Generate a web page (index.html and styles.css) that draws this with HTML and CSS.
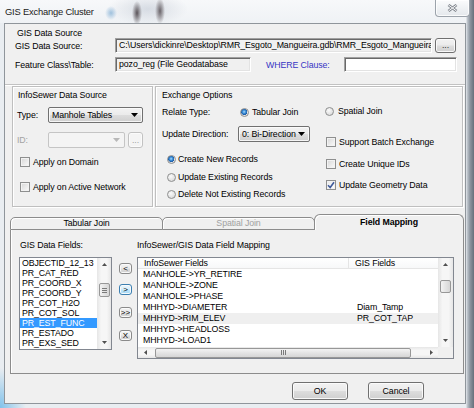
FILE: index.html
```html
<!DOCTYPE html>
<html lang="en">
<head>
<meta charset="utf-8">
<title>GIS Exchange Cluster</title>
<link rel="stylesheet" href="styles.css">
</head>
<body>
<div class="window">
  <div class="titlebar">
    <span class="title">GIS Exchange Cluster</span>
    <div class="close">
      <svg width="11" height="8" viewBox="0 0 11 8"><path d="M1.5 1 L9.5 7 M9.5 1 L1.5 7" stroke="#868b92" stroke-width="2.8"/><path d="M1.5 1 L9.5 7 M9.5 1 L1.5 7" stroke="#f6f7f9" stroke-width="1"/></svg>
    </div>
  </div>
  <div class="frame">
    <div class="client">
      <div class="gis-src">
        <div class="cap">GIS Data Source</div>
        <div class="row">
          <span class="lbl">GIS Data Source:</span>
          <div class="edit path">C:\Users\dickinre\Desktop\RMR_Esgoto_Mangueira.gdb\RMR_Esgoto_Mangueira</div>
          <div class="btn dots">...</div>
        </div>
        <div class="row row2">
          <span class="lbl">Feature Class\Table:</span>
          <div class="edit ro">pozo_reg (File Geodatabase</div>
          <span class="where">WHERE Clause:</span>
          <div class="edit where-box"></div>
        </div>
      </div>

      <div class="mid">
        <div class="box infosewer">
          <div class="cap">InfoSewer Data Source</div>
          <div class="frow type-row">
            <span class="flbl">Type:</span>
            <div class="combo type-combo"><span>Manhole Tables</span><svg width="7" height="4" viewBox="0 0 7 4"><path d="M0 0h7L3.5 4z" fill="#000"/></svg></div>
          </div>
          <div class="frow id-row">
            <span class="flbl dis">ID:</span>
            <div class="combo dis id-combo"><span></span><svg width="7" height="4" viewBox="0 0 7 4"><path d="M0 0h7L3.5 4z" fill="#b8b8b8"/></svg></div>
            <div class="btn mini dis">...</div>
          </div>
          <div class="chkrow dom"><span class="chk"></span>Apply on Domain</div>
          <div class="chkrow act"><span class="chk"></span>Apply on Active Network</div>
        </div>

        <div class="box exchange">
          <div class="ex-left">
            <div class="cap">Exchange Options</div>
            <div class="frow relate"><span class="rlbl">Relate Type:</span><span class="radio on"></span><span class="rtxt">Tabular Join</span></div>
            <div class="frow dir"><span class="dlbl">Update Direction:</span><div class="combo dir-combo"><span>0: Bi-Direction</span><svg width="7" height="4" viewBox="0 0 7 4"><path d="M0 0h7L3.5 4z" fill="#000"/></svg></div></div>
            <div class="rrow r1"><span class="radio on"></span>Create New Records</div>
            <div class="rrow r2"><span class="radio"></span>Update Existing Records</div>
            <div class="rrow r3"><span class="radio"></span>Delete Not Existing Records</div>
          </div>
          <div class="ex-right">
            <div class="rrow sp"><span class="radio"></span>Spatial Join</div>
            <div class="chkrow k1"><span class="chk"></span>Support Batch Exchange</div>
            <div class="chkrow k2"><span class="chk"></span>Create Unique IDs</div>
            <div class="chkrow k3"><span class="chk on"><svg width="8" height="8" viewBox="0 0 8 8"><path d="M1 4.2 L3.2 6.5 L7 1.2" fill="none" stroke="#3f5a9a" stroke-width="1.6"/></svg></span>Update Geometry Data</div>
          </div>
        </div>
      </div>

      <div class="tabs">
        <div class="tab t1">Tabular Join</div>
        <div class="tab t2">Spatial Join</div>
        <div class="tab active">Field Mapping</div>
        <div class="tab-fill"></div>
      </div>
      <div class="panel">
        <div class="col gis-col">
          <div class="plbl">GIS Data Fields:</div>
          <div class="listbox">
            <div class="items">
              <div>OBJECTID_12_13</div>
              <div>PR_CAT_RED</div>
              <div>PR_COORD_X</div>
              <div>PR_COORD_Y</div>
              <div>PR_COT_H2O</div>
              <div>PR_COT_SOL</div>
              <div class="sel">PR_EST_FUNC</div>
              <div>PR_ESTADO</div>
              <div>PR_EXS_SED</div>
            </div>
            <div class="vscroll">
              <div class="arr"><svg width="5" height="3" viewBox="0 0 5 3"><path d="M0 3h5L2.5 0z" fill="#505050"/></svg></div>
              <div class="track"><div class="thumb vthumb g1"><i></i><i></i><i></i></div></div>
              <div class="arr"><svg width="5" height="3" viewBox="0 0 5 3"><path d="M0 0h5L2.5 3z" fill="#505050"/></svg></div>
            </div>
          </div>
        </div>
        <div class="col btn-col">
          <div class="btn sb b1">&lt;</div>
          <div class="btn sb b2 hot">&gt;</div>
          <div class="btn sb b3">&gt;&gt;</div>
          <div class="btn sb b4">X</div>
        </div>
        <div class="col map-col">
          <div class="plbl">InfoSewer/GIS Data Field Mapping</div>
          <div class="listview">
            <div class="lv-body">
              <div class="lv-head"><span class="h1">InfoSewer Fields</span><span class="h2">GIS Fields</span></div>
              <div class="lv-row"><span class="lc1">MANHOLE-&gt;YR_RETIRE</span><span class="lc2"></span></div>
              <div class="lv-row"><span class="lc1">MANHOLE-&gt;ZONE</span><span class="lc2"></span></div>
              <div class="lv-row"><span class="lc1">MANHOLE-&gt;PHASE</span><span class="lc2"></span></div>
              <div class="lv-row"><span class="lc1">MHHYD-&gt;DIAMETER</span><span class="lc2">Diam_Tamp</span></div>
              <div class="lv-row hl"><span class="lc1">MHHYD-&gt;RIM_ELEV</span><span class="lc2">PR_COT_TAP</span></div>
              <div class="lv-row"><span class="lc1">MHHYD-&gt;HEADLOSS</span><span class="lc2"></span></div>
              <div class="lv-row"><span class="lc1">MHHYD-&gt;LOAD1</span><span class="lc2"></span></div>
            </div>
            <div class="vscroll lv-v">
              <div class="arr"><svg width="5" height="3" viewBox="0 0 5 3"><path d="M0 3h5L2.5 0z" fill="#505050"/></svg></div>
              <div class="track"><div class="thumb vthumb g2"></div></div>
              <div class="arr"><svg width="5" height="3" viewBox="0 0 5 3"><path d="M0 0h5L2.5 3z" fill="#505050"/></svg></div>
            </div>
            <div class="hscroll">
              <div class="harr"><svg width="3" height="5" viewBox="0 0 3 5"><path d="M3 0v5L0 2.5z" fill="#505050"/></svg></div>
              <div class="htrack"><div class="thumb hthumb"><i></i><i></i><i></i></div></div>
              <div class="harr"><svg width="3" height="5" viewBox="0 0 3 5"><path d="M0 0v5L3 2.5z" fill="#505050"/></svg></div>
            </div>
            <div class="corner"></div>
          </div>
        </div>
      </div>

      <div class="actions">
        <div class="btn act-btn ok">OK</div>
        <div class="btn act-btn cancel">Cancel</div>
      </div>
    </div>
  </div>
</div>
</body>
</html>
```

FILE: styles.css
```css
* { box-sizing: border-box; margin: 0; padding: 0; }
html, body { width: 474px; height: 408px; overflow: hidden; }
body {
  font-family: "Liberation Sans", Arial, sans-serif;
  font-size: 8.8px;
  letter-spacing: -0.1px;
  color: #000;
  background: #e9edf1;
}
svg { display: block; }

.window {
  width: 474px;
  height: 408px;
  display: flex;
  flex-direction: column;
  background:
    radial-gradient(ellipse 26px 40px at 0 408px, rgba(60, 165, 230, .6), transparent),
    linear-gradient(to right, transparent 466px, #c4cad1 467px, #8d96a0 470px, #66707b 474px),
    #e9edf1;
}

/* title bar */
.titlebar {
  height: 23px;
  flex: none;
  display: flex;
  justify-content: space-between;
  align-items: flex-start;
  padding-left: 5px;
  background:
    radial-gradient(ellipse 5px 12px at 137px 13px, rgba(45, 35, 40, .75), transparent),
    radial-gradient(ellipse 5px 13px at 160px 11px, rgba(55, 45, 50, .7), transparent),
    radial-gradient(ellipse 6px 7px at 111px 13px, rgba(90, 150, 200, .55), transparent),
    radial-gradient(ellipse 40px 16px at 148px 9px, rgba(190, 198, 210, .55), transparent),
    linear-gradient(to right, transparent 466px, #c4cad1 467px, #8d96a0 470px, #66707b 474px),
    linear-gradient(#f7f8fa, #eff2f5);
}
.title {
  font-size: 9.4px;
  letter-spacing: -0.2px;
  line-height: 12px;
  margin-top: 6px;
  color: #1a1a1a;
}
.close {
  width: 35px;
  height: 17px;
  margin-right: 4px;
  border: 1px solid #9ca3ab;
  border-top: none;
  border-radius: 0 0 4px 4px;
  background: linear-gradient(#fbfcfd, #e4e8ec);
  box-shadow: inset 0 0 0 1px rgba(255,255,255,.8);
  display: flex;
  align-items: center;
  justify-content: center;
}

.frame { flex: 1; display: flex; padding: 0 8px 4px 4px; }
.client {
  flex: 1;
  border: 1px solid #8f959b;
  background: #f0f0f0;
  display: flex;
  flex-direction: column;
}

/* top section */
.gis-src {
  height: 61px;
  flex: none;
  border-bottom: 1px solid #c2c2c2;
  box-shadow: 0 1px 0 #fff;
  padding: 4px 0 0 10px;
}
.cap { line-height: 12px; height: 12px; white-space: nowrap; }
.gis-src .cap { margin: -1px 0 0 2px; height: 11px; }
.row { display: flex; align-items: center; height: 15px; }
.row2 { margin-top: 4px; }
.lbl { width: 100px; flex: none; white-space: nowrap; }
.edit {
  height: 15px;
  background: #f0f0f0;
  border: 1px solid;
  border-color: #a0a0a0 #fff #fff #a0a0a0;
  box-shadow: inset 1px 1px 0 #696969, inset -1px -1px 0 #e3e3e3;
  padding: 0 3px;
  line-height: 13px;
  white-space: nowrap;
  overflow: hidden;
  flex: none;
}
.path { width: 317px; }
.ro { width: 136px; }
.where { width: 78px; margin-left: 15px; color: #3636c4; flex: none; white-space: nowrap; }
.where-box { width: 113px; background: #fff; }

.btn {
  border: 1px solid #707070;
  border-radius: 3px;
  background: linear-gradient(#f2f2f2 0%, #ebebeb 48%, #dddddd 52%, #cfcfcf 100%);
  box-shadow: inset 0 0 0 1px rgba(252,252,252,.9);
  display: flex;
  align-items: center;
  justify-content: center;
  flex: none;
}
.dots { width: 21px; height: 15px; margin-left: 3px; line-height: 8px; align-items: flex-start; padding-top: 2px; color: #333; }

/* middle boxes */
.mid { display: flex; margin: 1px 0 0 7px; gap: 2px; flex: none; }
.box {
  height: 121px;
  border: 1px solid #bfbfbf;
  box-shadow: inset 1px 1px 0 #fff, 1px 1px 0 #fff;
}
.infosewer { width: 141px; padding-left: 4px; }
.infosewer .cap { margin: 2px 0 0 1px; }
.frow { display: flex; align-items: center; white-space: nowrap; }
.type-row { margin-top: 6px; height: 16px; }
.id-row { margin-top: 9px; height: 16px; }
.flbl { width: 31px; flex: none; }
.dis { color: #a3a3a3; }

.combo {
  height: 16px;
  border: 1px solid #707070;
  border-radius: 2px;
  background: linear-gradient(#f3f3f3 0%, #ebebeb 48%, #dddddd 52%, #cfcfcf 100%);
  box-shadow: inset 0 0 0 1px rgba(252,252,252,.85);
  display: flex;
  align-items: center;
  justify-content: space-between;
  padding: 0 4px 0 3px;
  flex: none;
  white-space: nowrap;
}
.type-combo { width: 95px; }
.id-combo { width: 77px; border-color: #c5c5c5; background: #f4f4f4; box-shadow: none; }
.mini { width: 15px; height: 16px; margin-left: 3px; border-color: #c2c2c2; background: #f4f4f4; line-height: 8px; align-items: flex-start; padding-top: 3px; }
.dir-combo { width: 72px; }

.chkrow, .rrow { display: flex; align-items: center; height: 12px; white-space: nowrap; }
.chk {
  width: 10px; height: 10px; flex: none;
  border: 1px solid #8e8f8f;
  background: linear-gradient(135deg, #d6d6d6, #fbfbfb);
  box-shadow: inset 0 0 0 1px #f2f2f2;
  margin-right: 3px;
  display: flex; align-items: center; justify-content: center;
}
.chk.on { background: linear-gradient(135deg, #e8e8e8, #ffffff); }
.radio {
  width: 9px; height: 9px; flex: none;
  border-radius: 50%;
  border: 1px solid #8e8f8f;
  background: radial-gradient(circle at 40% 35%, #fafafa, #d2d2d2);
}
.radio.on {
  background:
    radial-gradient(circle at 45% 40%, #a9dcff 0, #3d8fd8 1.6px, #1b5aa5 3px, transparent 3.3px),
    radial-gradient(circle at 40% 35%, #fafafa, #d9d9d9);
}

.infosewer .dom { margin-top: 8px; padding-left: 3px; }
.infosewer .act { margin-top: 13px; padding-left: 3px; }

.exchange { width: 308px; padding-left: 6px; display: flex; }
.ex-left { width: 163px; flex: none; }
.exchange .cap { margin-top: 2px; }
.relate { margin-top: 5px; height: 12px; }
.rlbl { width: 78px; flex: none; }
.rtxt { margin-left: 3px; }
.dir { margin-top: 8px; height: 16px; }
.dlbl { width: 76px; flex: none; }
.ex-left .rrow { padding-left: 5px; }
.ex-left .rrow .radio { margin-right: 2px; }
.r1 { margin-top: 11px; }
.r2 { margin-top: 6px; }
.r3 { margin-top: 5px; }
.ex-right .sp { margin-top: 18px; }
.ex-right .sp .radio { margin-right: 4px; }
.ex-right .chkrow { padding-left: 1px; }
.k1 { margin-top: 19px; }
.k2 { margin-top: 10px; }
.k3 { margin-top: 9px; }

/* tabs */
.tabs { display: flex; align-items: flex-end; margin: 7px 0 0 5px; height: 16px; flex: none; width: 454px; }
.tab {
  height: 13px;
  border: 1px solid #8c8c8c;
  border-radius: 5px 5px 0 0;
  background: #f0f0f0;
  box-shadow: inset 1px 1px 0 #fff;
  text-align: center;
  line-height: 11px;
  flex: none;
}
.t1 { width: 153px; }
.t2 { width: 153px; margin-left: -1px; color: #a0a0a0; }
.tab.active {
  width: 150px;
  height: 16px;
  margin-left: -1px;
  border-bottom: none;
  font-weight: bold;
  line-height: 15px;
  border-radius: 6px 6px 0 0;
}
.tab-fill { flex: 1; border-bottom: 1px solid #8c8c8c; }

.panel {
  margin-left: 5px;
  width: 454px;
  height: 144px;
  flex: none;
  border: 1px solid #8c8c8c;
  border-top: none;
  box-shadow: inset 1px 0 0 #fff;
  display: flex;
  padding: 9px 0 0 8px;
}
.col { display: flex; flex-direction: column; flex: none; }
.plbl { height: 12px; line-height: 12px; margin-bottom: 6px; white-space: nowrap; }
.gis-col { width: 93px; }
.gis-col .plbl { margin-left: 1px; }
.listbox {
  height: 93px;
  border: 1px solid #828790;
  background: #fff;
  display: flex;
}
.items { flex: 1; overflow: hidden; }
.items div { height: 10px; line-height: 10px; padding-left: 2px; white-space: nowrap; }
.items .sel { background: #3399ff; color: #fff; }

.vscroll {
  width: 14px;
  flex: none;
  display: flex;
  flex-direction: column;
  background: linear-gradient(to right, #e6e6e6, #f6f6f6 30%, #f6f6f6 70%, #e6e6e6);
}
.arr { height: 13px; display: flex; align-items: center; justify-content: center; flex: none; }
.track { flex: 1; display: flex; flex-direction: column; align-items: center; }
.thumb {
  border: 1px solid #979797;
  border-radius: 2px;
  background: linear-gradient(to right, #f3f3f3, #e4e4e4 50%, #d6d6d6);
  display: flex;
  align-items: center;
  justify-content: center;
  gap: 1px;
}
.vthumb { width: 11px; flex-direction: column; }
.vthumb i { display: block; width: 5px; height: 1px; background: #7a7a7a; }
.g1 { height: 14px; margin-top: 12px; }
.g2 { height: 13px; margin-top: 9px; }

.btn-col { margin-left: 7px; width: 13px; padding-top: 24px; }
.sb { width: 13px; height: 11px; font-size: 8px; line-height: 9px; border-color: #8a8a8a; letter-spacing: 0; }
.b2 { margin-top: 10px; }
.b3 { margin-top: 12px; }
.b4 { margin-top: 12px; }
.sb.hot { border-color: #3c7fb1; background: linear-gradient(#eaf6fd, #d9f0fc 48%, #bee6fd 52%, #a7d9f5); }

.map-col { margin-left: 5px; width: 317px; }
.listview {
  height: 102px;
  border: 1px solid #828790;
  background: #fff;
  display: grid;
  grid-template-columns: 300px 15px;
  grid-template-rows: 89px 11px;
}
.lv-body { overflow: hidden; }
.lv-head {
  height: 11px;
  display: flex;
  line-height: 10px;
  border-bottom: 1px solid #e5e5e5;
  background: linear-gradient(#ffffff, #f7f8f9);
  white-space: nowrap;
}
.h1 { width: 211px; padding-left: 6px; border-right: 1px solid #e5e5e5; flex: none; }
.h2 { padding-left: 6px; }
.lv-row { height: 11px; line-height: 11px; display: flex; white-space: nowrap; }
.lv-row.hl { background: #efefef; }
.lc1 { width: 212px; padding-left: 5px; flex: none; }
.lc2 { padding-left: 7px; }
.lv-v { width: 15px; }
.hscroll {
  display: flex;
  background: linear-gradient(#e6e6e6, #f6f6f6 30%, #f6f6f6 70%, #e6e6e6);
}
.harr { width: 14px; display: flex; align-items: center; justify-content: center; flex: none; }
.htrack { flex: 1; display: flex; align-items: center; padding: 0 13px 0 3px; }
.hthumb { flex: 1; height: 10px; background: linear-gradient(#f3f3f3, #e4e4e4 50%, #d6d6d6); gap: 1px; }
.hthumb i { display: block; width: 1px; height: 5px; background: #7a7a7a; }
.corner { background: #f0f0f0; }

/* action buttons */
.actions { display: flex; margin: 8px 0 0 287px; flex: none; }
.act-btn { width: 56px; height: 18px; }
.cancel { margin-left: 20px; }
```
